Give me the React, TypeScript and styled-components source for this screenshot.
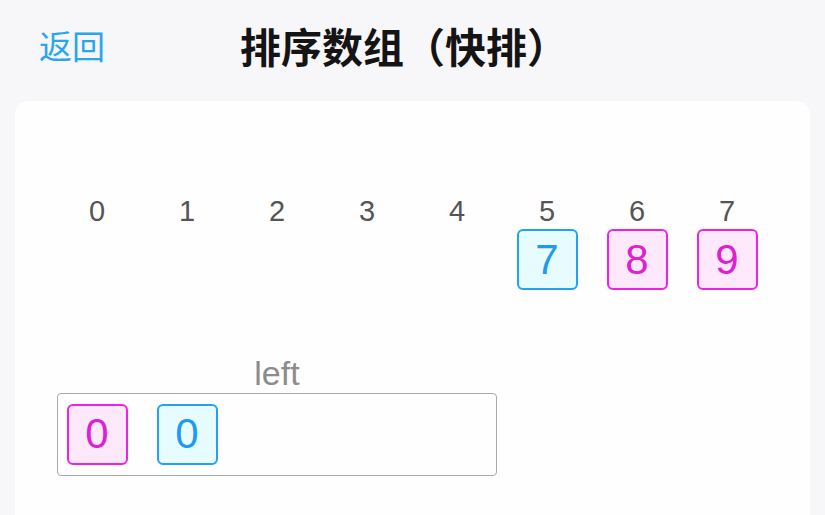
import React from "react";
import styled, { createGlobalStyle, css } from "styled-components";

const GlobalStyle = createGlobalStyle`
  html, body {
    margin: 0;
    padding: 0;
    background: #f7f6f9;
  }
  body {
    font-family: "Liberation Sans", "Noto Sans CJK SC", sans-serif;
  }
`;

const Page = styled.div`
  width: 825px;
  height: 515px;
  overflow: hidden;
  background: #f7f6f9;
  display: flex;
  flex-direction: column;
`;

const Header = styled.header`
  height: 90px;
  flex-shrink: 0;
  display: flex;
  align-items: center;
  padding-left: 39px;
  gap: 135px;
`;

const BackLink = styled.span`
  font-family: "Noto Sans CJK SC", sans-serif;
  font-size: 33px;
  line-height: 1;
  color: #2aa6ee;
`;

const Title = styled.h1`
  margin: 0;
  font-family: "Noto Sans CJK SC", sans-serif;
  font-size: 41px;
  line-height: 1;
  font-weight: 700;
  color: #141414;
`;

const Card = styled.main`
  margin: 11px 15px 0;
  flex: 1;
  min-height: 500px;
  background: #fefefe;
  border-radius: 14px 14px 0 0;
  padding: 95px 37px 0;
  display: flex;
  flex-direction: column;
`;

const Track = styled.div`
  display: grid;
  grid-template-columns: repeat(8, 90px);
`;

const IndexCell = styled.div`
  font-size: 29px;
  line-height: 30px;
  height: 30px;
  text-align: center;
  color: #555555;
`;

const SlotCell = styled.div`
  height: 61px;
  margin-top: 3px;
  display: flex;
  justify-content: center;
`;

type Tone = "blue" | "pink";

const Cell = styled.div<{ $tone: Tone }>`
  box-sizing: border-box;
  width: 61px;
  height: 61px;
  border-radius: 6px;
  border: 2.5px solid;
  display: flex;
  align-items: center;
  justify-content: center;
  font-size: 42px;
  line-height: 1;
  ${(p) =>
    p.$tone === "blue"
      ? css`
          border-color: #22a2f2;
          background: #e6fcff;
          color: #1f9aee;
        `
      : css`
          border-color: #ee22e4;
          background: #fde9fb;
          color: #dc20d2;
        `}
`;

const Partition = styled.section<{ $span: number }>`
  grid-column: span ${(p) => p.$span};
  margin: 66px 5px 0;
  display: flex;
  flex-direction: column;
  align-items: stretch;
`;

const PartitionLabel = styled.div`
  font-size: 34px;
  line-height: 34px;
  text-align: center;
  color: #8c8c8c;
  margin-bottom: 3px;
`;

const Bucket = styled.div`
  box-sizing: border-box;
  height: 83px;
  border: 1.5px solid #a9a9a9;
  border-radius: 4px;
  padding: 9.5px 8.5px;
  display: flex;
  gap: 29px;
`;

const values: (null | { v: number; tone: Tone })[] = [
  null,
  null,
  null,
  null,
  null,
  { v: 7, tone: "blue" },
  { v: 8, tone: "pink" },
  { v: 9, tone: "pink" },
];

const leftItems: { v: number; tone: Tone }[] = [
  { v: 0, tone: "pink" },
  { v: 0, tone: "blue" },
];

export default function App() {
  return (
    <>
      <GlobalStyle />
      <Page>
        <Header>
          <BackLink>返回</BackLink>
          <Title>排序数组（快排）</Title>
        </Header>
        <Card>
          <Track>
            {values.map((_, i) => (
              <IndexCell key={`i${i}`}>{i}</IndexCell>
            ))}
            {values.map((item, i) => (
              <SlotCell key={`s${i}`}>
                {item && <Cell $tone={item.tone}>{item.v}</Cell>}
              </SlotCell>
            ))}
            <Partition $span={5}>
              <PartitionLabel>left</PartitionLabel>
              <Bucket>
                {leftItems.map((it, i) => (
                  <Cell key={i} $tone={it.tone}>
                    {it.v}
                  </Cell>
                ))}
              </Bucket>
            </Partition>
          </Track>
        </Card>
      </Page>
    </>
  );
}
